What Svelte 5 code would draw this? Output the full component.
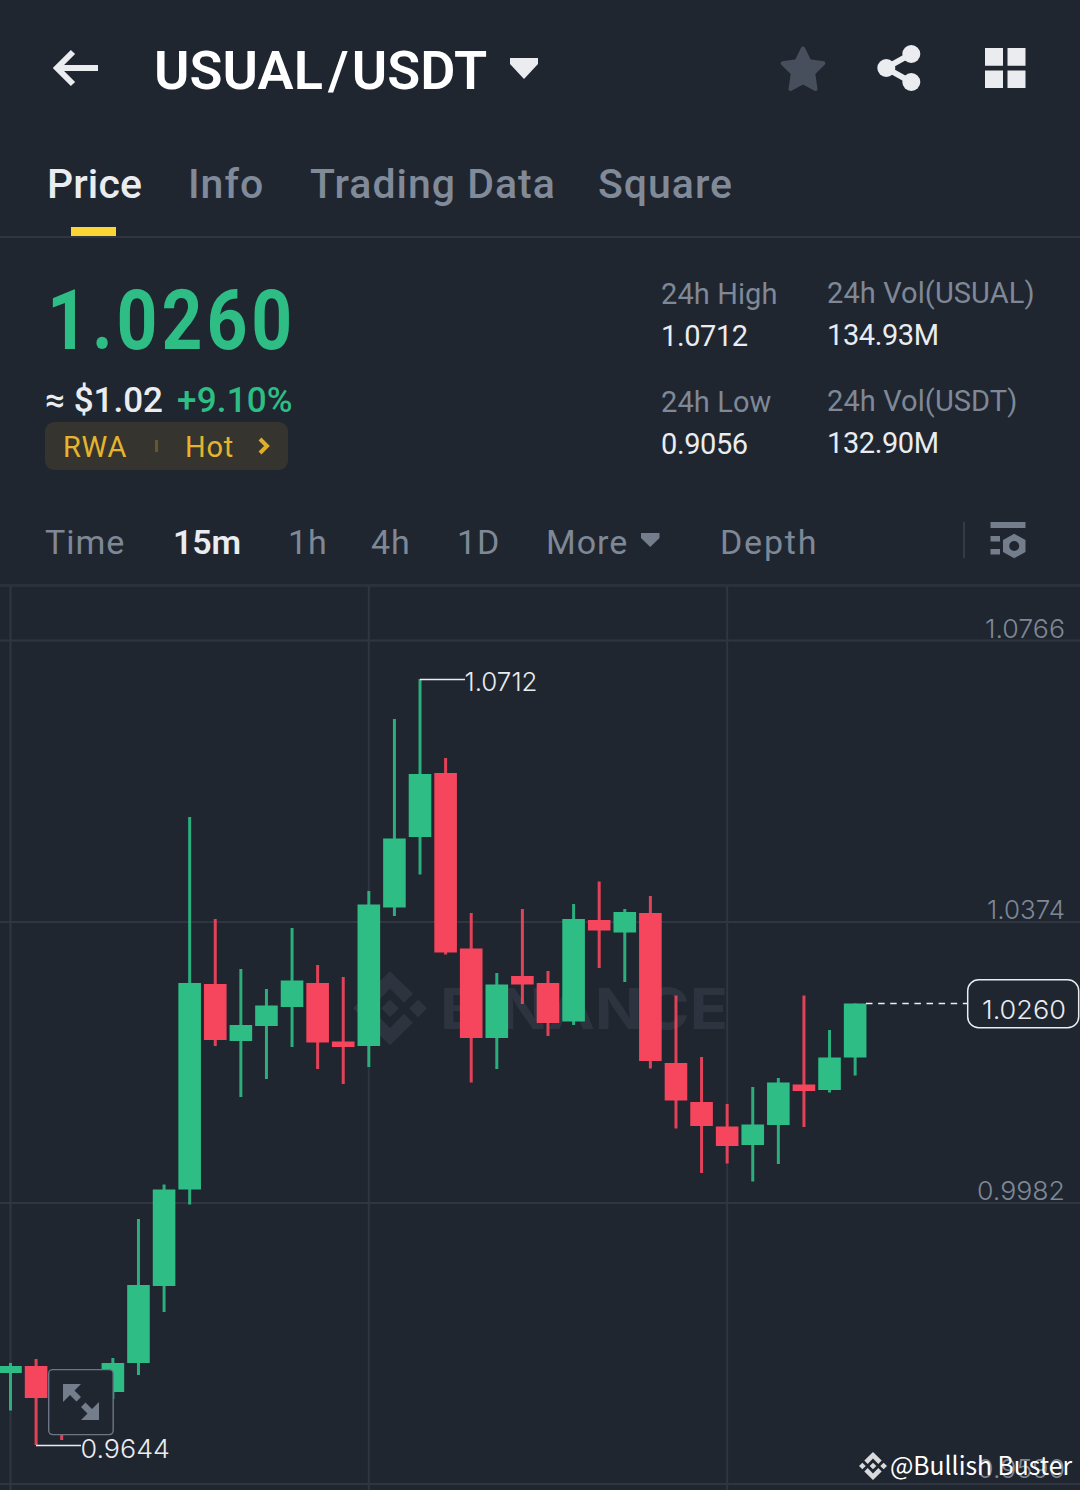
<script lang="ts">
  type Candle = [up: number, high: number, top: number, bottom: number, low: number];

  const tabs = ["Price", "Info", "Trading Data", "Square"];
  const intervals = ["Time", "15m", "1h", "4h", "1D"];

  const stats = [
    [
      { label: "24h High", value: "1.0712" },
      { label: "24h Low", value: "0.9056" },
    ],
    [
      { label: "24h Vol(USUAL)", value: "134.93M" },
      { label: "24h Vol(USDT)", value: "132.90M" },
    ],
  ];

  // x of the first candle and distance between candles
  const START = 10.5;
  const STEP = 25.595;
  const BODY = 22.6;

  const candles: Candle[] = [
    [1, 1363, 1366, 1373, 1410.5],
    [0, 1359, 1366, 1398, 1445],
    [0, 1390, 1398, 1420, 1440],
    [1, 1385, 1392, 1415, 1425],
    [1, 1358, 1363, 1392, 1399],
    [1, 1219, 1285, 1363, 1375],
    [1, 1184.5, 1189.5, 1286, 1312],
    [1, 817, 983, 1189.5, 1204.5],
    [0, 919, 984, 1040, 1046],
    [1, 969, 1025, 1041, 1097],
    [1, 989, 1005.5, 1026, 1079],
    [1, 928, 980.5, 1007, 1047],
    [0, 965, 983, 1042.5, 1069],
    [0, 977, 1041.5, 1047, 1084],
    [1, 891, 904.5, 1046, 1067],
    [1, 719, 838.5, 907.5, 916],
    [1, 679, 774, 837, 874.5],
    [0, 758, 773, 952.5, 954.5],
    [0, 913, 948.5, 1038, 1082.5],
    [1, 973, 984.5, 1038, 1069],
    [0, 909, 976, 984.5, 1004],
    [0, 971, 983, 1023, 1036],
    [1, 904, 919, 1021.5, 1025],
    [0, 881.5, 920, 930.5, 968],
    [1, 909, 912, 932.5, 982],
    [0, 896, 913, 1061, 1068.5],
    [0, 995.5, 1063, 1100.5, 1128.5],
    [0, 1057, 1102, 1126, 1173],
    [0, 1104, 1126.5, 1146, 1163.5],
    [1, 1087, 1124.5, 1145, 1181.5],
    [1, 1078, 1082.5, 1125, 1164],
    [0, 995.5, 1084.5, 1091, 1127],
    [1, 1030, 1057.5, 1090, 1092.5],
    [1, 1003.5, 1003.5, 1057.5, 1075.5],
  ];

  const prices = [
    { text: "1.0766", y: 640.5, x: 985, w: 80, base: 637.7 },
    { text: "1.0374", y: 922, x: 987, w: 78, base: 919 },
    { text: "0.9982", y: 1203, x: 977, w: 88, base: 1200 },
    { text: "0.9590", y: 1484, x: 977, w: 88, base: 1478 },
  ];

  const columns = [10.5, 368.8, 727.2];
</script>

{#snippet logo(cx: number, cy: number, r: number)}
  <g transform="translate({cx} {cy}) scale({r / 100})">
    <path d="M0-100 62-39 38-15 0-53-38-15-62-39Z" />
    <path d="M0 100 62 39 38 15 0 53-38 15-62 39Z" />
    <path d="M0-24 24 0 0 24-24 0Z" />
    <path d="M76-24 100 0 76 24 52 0Z" />
    <path d="M-76-24-52 0-76 24-100 0Z" />
  </g>
{/snippet}

<div class="app">
  <header>
    <svg class="back" width="48" height="40" viewBox="51 48 48 40">
      <path d="M98 68H57M73 52 57 68l16 16" fill="none" stroke="#eaecef" stroke-width="6" />
    </svg>
    <h1>USUAL<span>/</span>USDT</h1>
    <svg class="caret" width="28" height="22" viewBox="0 0 28 22">
      <path d="M0 0h28v6L14 21 0 6Z" fill="#eaecef" />
    </svg>
    <div class="actions">
      <svg width="46" height="48" viewBox="780 44 46 48">
        <path
          d="M803 48.500 809.300 61.200 823.300 63.300 813.200 73.400 815.500 89 803 82.300 790.500 89 792.800 73.400 782.700 63.300 796.700 61.200Z"
          fill="#474f5c"
          stroke="#474f5c"
          stroke-width="4"
          stroke-linejoin="round"
        />
      </svg>
      <svg width="46" height="48" viewBox="876 44 46 48">
        <path d="M911 54 886 68l25 14" fill="none" stroke="#eaecef" stroke-width="6" />
        <g fill="#eaecef">
          <circle cx="911.300" cy="54" r="9" />
          <circle cx="886.300" cy="68" r="9" />
          <circle cx="911.300" cy="82" r="9" />
        </g>
      </svg>
      <svg width="41" height="40" viewBox="0 0 41 40">
        <path d="M0 0h18v17.700H0zM22.500 0h18v17.700h-18zM0 22.500h18V40H0zM22.500 22.500h18V40h-18z" fill="#eaecef" />
      </svg>
    </div>
  </header>

  <nav class="tabs">
    {#each tabs as tab, i}
      <span class="tab" class:active={i === 0}>{tab}</span>
    {/each}
  </nav>

  <section class="summary">
    <div class="quote">
      <div class="price">1.0260</div>
      <div class="converted">
        <span class="fiat">≈ $1.02</span>
        <span class="change">+9.10%</span>
      </div>
      <div class="tags">
        <span class="rwa">RWA</span>
        <i></i>
        <span class="hot">Hot</span>
        <svg width="12" height="18" viewBox="0 0 12 18">
          <path d="M2 2 9 9 2 16" fill="none" stroke="#e0ad28" stroke-width="4" />
        </svg>
      </div>
    </div>
    {#each stats as column, i}
      <div class="stats" class:volume={i === 1}>
        {#each column as stat}
          <div class="stat">
            <div class="stat-label">{stat.label}</div>
            <div class="stat-value">{stat.value}</div>
          </div>
        {/each}
      </div>
    {/each}
  </section>

  <nav class="intervals">
    {#each intervals as interval}
      <span class:selected={interval === "15m"}>{interval}</span>
    {/each}
    <span class="more">
      More
      <svg width="19" height="15" viewBox="0 0 19 15">
        <path d="M0 0h18.500v5L9.250 14 0 5Z" fill="#747d8c" />
      </svg>
    </span>
    <span>Depth</span>
    <i class="divider"></i>
    <svg width="36" height="38" viewBox="990.500 521 36 38">
      <g fill="#747d8c">
        <path d="M991 522h35v6h-35zM991 536h9.500v5.500H991zM991 549h9.500v5.500H991z" />
        <path
          fill-rule="evenodd"
          d="M1014.700 533.800 1026 540v12l-11.300 6.200-11.200-6.200v-12ZM1014.700 541a5 5 0 1 0 0 10 5 5 0 0 0 0-10Z"
        />
      </g>
    </svg>
  </nav>

  <svg class="chart" width="1080" height="904" viewBox="0 586 1080 904">
    <g class="grid">
      {#each prices as p}
        <line x1="0" x2="1080" y1={p.y} y2={p.y} />
      {/each}
      {#each columns as x}
        <line x1={x} x2={x} y1="586" y2="1490" />
      {/each}
    </g>

    <g class="brand">
      {@render logo(390, 1008.3, 37)}
      <text x="440" y="1029" textLength="288" lengthAdjust="spacingAndGlyphs">BINANCE</text>
    </g>

    {#each candles as [up, high, top, bottom, low], i}
      {@const x = START + i * STEP}
      <g class={up ? "up" : "down"}>
        <rect class="wick" x={x - 1.5} y={high} width="3" height={low - high} />
        <rect x={x - BODY / 2} y={top} width={BODY} height={bottom - top} />
      </g>
    {/each}

    <g class="axis">
      {#each prices as p}
        <text x={p.x} y={p.base} textLength={p.w} lengthAdjust="spacingAndGlyphs">{p.text}</text>
      {/each}
    </g>

    <g class="marks">
      <path d="M420 679.500h45M36 1445.500h45" />
      <path d="M866 1003.500h102" stroke-dasharray="6.500 5.600" />
      <rect x="967.700" y="979.700" width="111" height="48" rx="11" />
      <text x="464.500" y="690.700" textLength="73" lengthAdjust="spacingAndGlyphs">1.0712</text>
      <text x="80.500" y="1457.700" textLength="89.500" lengthAdjust="spacingAndGlyphs">0.9644</text>
      <text x="982" y="1018.700" textLength="84" lengthAdjust="spacingAndGlyphs">1.0260</text>
    </g>

    <g class="expand">
      <rect x="48.700" y="1369.600" width="64.500" height="65" rx="4" />
      <path d="M63 1384h18l-6.500 6.500 6.500 6.500-4.500 4.500-6.500-6.500-7 7ZM99 1420H81l6.500-6.500-6.500-6.500 4.500-4.500 6.500 6.500 7-7Z" />
    </g>

    <g class="credit">
      {@render logo(873, 1466, 14)}
      <text x="890" y="1475" textLength="182" lengthAdjust="spacingAndGlyphs">@Bullish Buster</text>
    </g>
  </svg>
</div>

<style>
  :global(body) {
    background: #1f2630;
  }

  .app {
    width: 1080px;
    height: 1490px;
    overflow: hidden;
    background: #1f2630;
    color: #eaecef;
    font-family: Roboto, "Liberation Sans", sans-serif;
  }

  svg {
    display: block;
    flex-shrink: 0;
  }

  header {
    display: flex;
    align-items: center;
    height: 136px;
    padding: 0 54px 0 51px;
  }

  h1 {
    width: 356px;
    margin: 4px 0 0 55px;
    font-size: 54px;
    font-weight: 600;
    letter-spacing: 0.1px;
    color: #fff;
    white-space: nowrap;
  }
  h1 span {
    margin: 0 3px 0 5px;
  }

  .caret {
    margin-top: 2px;
  }

  .actions {
    display: flex;
    align-items: center;
    margin-left: auto;
  }
  .actions svg + svg {
    margin-left: 50px;
  }
  .actions svg:last-child {
    margin-left: 63px;
  }

  .tabs {
    display: grid;
    grid-template-columns: 141px 122px 288px 1fr;
    height: 100px;
    padding-left: 47px;
    border-bottom: 2px solid #2f3641;
  }

  .tab {
    font-size: 41px;
    font-weight: 500;
    line-height: 96px;
    letter-spacing: 1px;
    color: #818a99;
    white-space: nowrap;
  }
  .tab.active {
    width: 94px;
    letter-spacing: 0.1px;
    color: #eaecef;
  }
  .tab.active::after {
    content: "";
    display: block;
    width: 45px;
    height: 9px;
    margin: -5px 0 0 24px;
    background: #fbd535;
  }

  .summary {
    display: flex;
    height: 227px;
    padding: 35px 0 0 45px;
  }

  .quote {
    width: 616px;
    padding-top: 6px;
  }

  /* narrow digits for the headline price */
  .price {
    margin-left: 2px;
    font-size: 83px;
    font-weight: 700;
    line-height: 84px;
    letter-spacing: 4.6px;
    color: #2ebd85;
    transform: scaleX(0.86);
    transform-origin: left;
  }

  .converted {
    display: flex;
    margin-top: 15px;
    font-size: 35px;
    font-weight: 500;
    line-height: 46px;
    height: 44px;
  }
  .fiat {
    width: 132px;
  }
  .change {
    color: #2ebd85;
    letter-spacing: 0.2px;
  }

  .tags {
    display: flex;
    align-items: center;
    box-sizing: border-box;
    width: 243px;
    height: 48px;
    padding: 0 0 0 18px;
    border-radius: 9px;
    background: #35342e;
    color: #e5b42e;
    font-size: 29px;
    line-height: 50px;
    letter-spacing: 0.7px;
  }
  .tags span {
    padding-top: 1px;
  }
  .rwa {
    width: 92px;
  }
  .tags i {
    width: 3px;
    height: 12px;
    background: #66562c;
  }
  .hot {
    width: 73px;
    margin-left: 27px;
  }

  .stats {
    width: 166px;
  }
  .stats.volume {
    width: 230px;
    margin-top: -1px;
  }
  .stat {
    margin-bottom: 24px;
    font-size: 29px;
    line-height: 42px;
    white-space: nowrap;
  }
  .stat-label {
    color: #7f8896;
    letter-spacing: 0.1px;
  }
  .stat-value {
    letter-spacing: -0.4px;
  }

  .intervals {
    display: flex;
    align-items: center;
    box-sizing: border-box;
    height: 87px;
    padding: 0 0 4px 45px;
    border-bottom: 3px solid #2b313b;
    color: #7f8896;
    font-size: 34px;
    line-height: 40px;
    letter-spacing: 1px;
  }
  .intervals span {
    padding-top: 3px;
    white-space: nowrap;
  }
  .intervals span:nth-child(1) {
    width: 128px;
  }
  .intervals span:nth-child(2) {
    width: 115px;
  }
  .intervals span:nth-child(3) {
    width: 83px;
  }
  .intervals span:nth-child(4) {
    width: 86px;
  }
  .intervals span:nth-child(5) {
    width: 89px;
  }
  .intervals .more {
    display: flex;
    align-items: center;
    justify-content: space-between;
    width: 114px;
  }
  .intervals .more svg {
    margin-top: -3px;
  }
  .intervals .more + span {
    width: 243px;
    margin-left: 60px;
    letter-spacing: 1.8px;
  }
  .intervals .selected {
    color: #eaecef;
    font-weight: 600;
    letter-spacing: -0.2px;
  }
  .divider {
    width: 2px;
    height: 36px;
    margin-right: 25px;
    background: #343b47;
  }

  .chart {
    margin-top: -1px;
  }

  .grid line {
    stroke: #2f3641;
    stroke-width: 2;
  }

  .brand {
    fill: #2e343f;
    font: 700 57px Inter, sans-serif;
  }

  .up {
    fill: #2ebd85;
  }
  .down {
    fill: #f6465d;
  }
  .wick {
    opacity: 0.9;
  }

  .axis text,
  .marks text {
    font: 300 26px Inter, "Liberation Sans", sans-serif;
  }
  .axis {
    fill: #7f8896;
  }
  .marks path,
  .marks rect {
    fill: none;
    stroke: #eaecef;
    stroke-width: 1.5;
  }
  .marks text {
    fill: #eaecef;
  }

  .expand rect {
    fill: #1f2630;
    stroke: #6d7685;
    stroke-width: 1.4;
  }
  .expand path {
    fill: #747d8c;
  }

  .credit {
    fill: #d9dadc;
  }
  .credit text {
    fill: #fff;
    font: 400 25px "Noto Sans CJK SC", sans-serif;
  }
</style>
